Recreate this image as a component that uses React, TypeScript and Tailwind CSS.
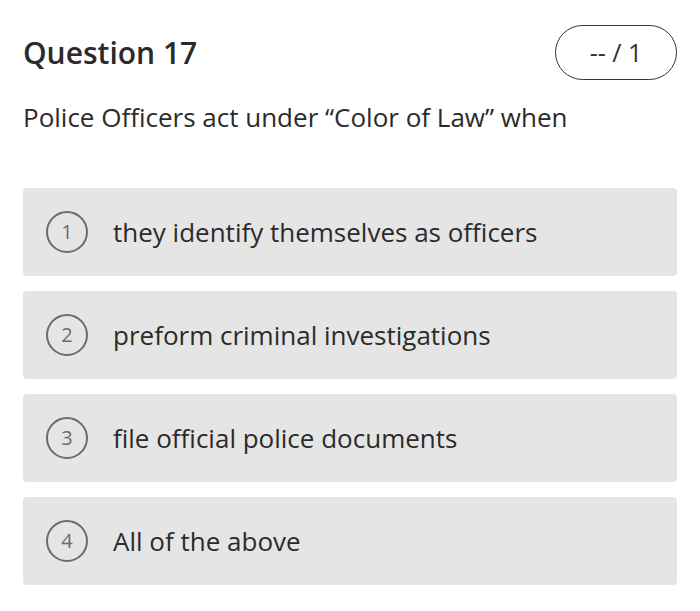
import React from 'react';

const options = [
  'they identify themselves as officers',
  'preform criminal investigations',
  'file official police documents',
  'All of the above',
];

export default function App() {
  return (
    <div className="w-[700px] h-[611px] bg-white px-[23px] pt-[25px] text-[#2b2b2b]" style={{ fontFamily: '"Open Sans", sans-serif' }}>
      <div className="flex items-center justify-between h-[55px]">
        <h1 className="text-[30px] font-semibold leading-none">Question 17</h1>
        <div className="w-[122px] h-[55px] rounded-full border-[1.5px] border-[#333] flex items-center justify-center text-[25px] text-[#333]">
          -- / 1
        </div>
      </div>
      <p className="mt-[19px] text-[26px] leading-[36px]">Police Officers act under “Color of Law” when</p>
      <div className="mt-[53px] flex flex-col gap-[15px]">
        {options.map((o, i) => (
          <div key={i} className="h-[88px] bg-[#e5e5e5] rounded-[4px] flex items-center pl-[23px]">
            <div className="w-[42px] h-[42px] rounded-full border-2 border-[#6b6b6b] flex items-center justify-center text-[20px] text-[#6b6b6b] shrink-0">
              {i + 1}
            </div>
            <span className="ml-[25px] text-[26px]">{o}</span>
          </div>
        ))}
      </div>
    </div>
  );
}
